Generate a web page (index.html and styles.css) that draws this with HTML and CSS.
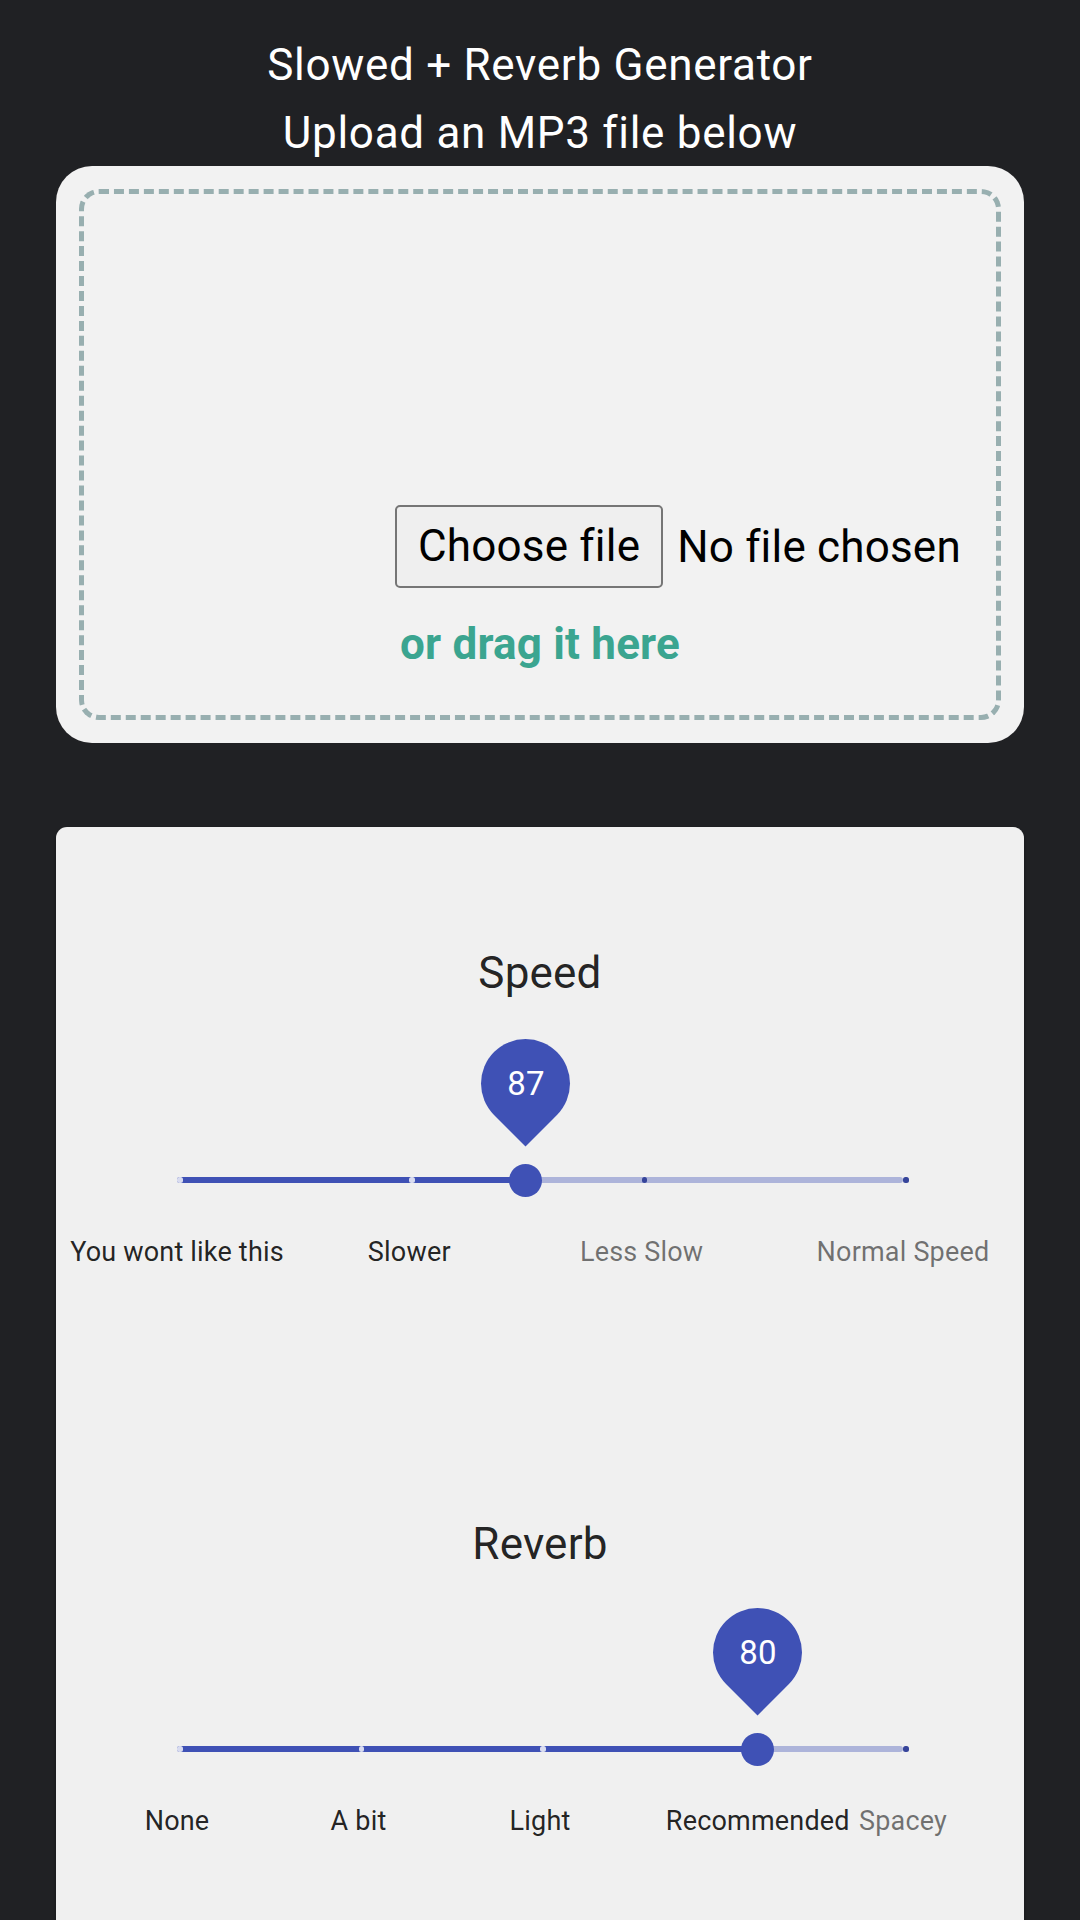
FILE: index.html
```html
<!DOCTYPE html>
<html lang="en">
<head>
<meta charset="utf-8">
<title>Slowed + Reverb Generator</title>
<link rel="stylesheet" href="styles.css">
</head>
<body>
<header class="intro">
  <div class="intro-line">Slowed + Reverb Generator</div>
  <div class="intro-line">Upload an MP3 file below</div>
</header>

<section class="upload">
  <div class="dropzone">
    <div class="file-row">
      <span class="file-button">Choose file</span>
      <span class="file-status">No file chosen</span>
    </div>
    <div class="drag-hint">or drag it here</div>
  </div>
</section>

<main class="controls">
  <div class="control">
    <div class="control-title">Speed</div>
    <div class="slider">
      <div class="rail"></div>
      <div class="track" style="width:48%"></div>
      <span class="mark mark-active" style="left:0%"></span>
      <span class="mark mark-active" style="left:32%"></span>
      <span class="mark" style="left:64%"></span>
      <span class="mark" style="left:100%"></span>
      <span class="thumb" style="left:48%"></span>
      <span class="pin" style="left:48%"><span class="pin-value">87</span></span>
      <span class="mark-label mark-label-active" style="left:0%">You wont like this</span>
      <span class="mark-label mark-label-active" style="left:32%">Slower</span>
      <span class="mark-label" style="left:64%">Less Slow</span>
      <span class="mark-label" style="left:100%">Normal Speed</span>
    </div>
  </div>

  <div class="control">
    <div class="control-title">Reverb</div>
    <div class="slider">
      <div class="rail"></div>
      <div class="track" style="width:80%"></div>
      <span class="mark mark-active" style="left:0%"></span>
      <span class="mark mark-active" style="left:25%"></span>
      <span class="mark mark-active" style="left:50%"></span>
      <span class="mark mark-active" style="left:80%"></span>
      <span class="mark" style="left:100%"></span>
      <span class="thumb" style="left:80%"></span>
      <span class="pin" style="left:80%"><span class="pin-value">80</span></span>
      <span class="mark-label mark-label-active" style="left:0%">None</span>
      <span class="mark-label mark-label-active" style="left:25%">A bit</span>
      <span class="mark-label mark-label-active" style="left:50%">Light</span>
      <span class="mark-label mark-label-active" style="left:80%">Recommended</span>
      <span class="mark-label" style="left:100%">Spacey</span>
    </div>
  </div>
</main>
</body>
</html>
```

FILE: styles.css
```css
* {
  box-sizing: border-box;
}

html,
body {
  margin: 0;
  padding: 0;
  background: #202124;
}

body {
  font-family: "Roboto", "Noto Sans", "Liberation Sans", sans-serif;
  letter-spacing: 0.012em;
  overflow: hidden;
}

.intro {
  padding-top: 31px;
  text-align: center;
  color: #ffffff;
  font-size: 44px;
  line-height: 68px;
  letter-spacing: 0.016em;
}

.upload {
  margin: -1px 56px 0;
  height: 577px;
  padding: 23px;
  background: #f2f2f2;
  border-radius: 36px;
}

.dropzone {
  height: 100%;
  border: 5px dashed #98afb0;
  border-radius: 20px;
  padding-top: 311px;
  display: flex;
  flex-direction: column;
  align-items: center;
}

.file-row {
  width: 290px;
  display: flex;
  align-items: center;
  gap: 14px;
}

.file-button {
  flex-shrink: 0;
  height: 83px;
  padding: 0 21px;
  border: 2px solid #767676;
  border-radius: 5px;
  background: #efefef;
  color: #000000;
  font-size: 44px;
  line-height: 79px;
  white-space: nowrap;
}

.file-status {
  flex-shrink: 0;
  color: #000000;
  font-size: 44px;
  white-space: nowrap;
}

.drag-hint {
  margin-top: 30px;
  color: #3ba590;
  font-size: 44px;
  font-weight: 700;
  line-height: 52px;
}

.controls {
  margin: 84px 56px 0;
  padding: 120px 0 240px;
  background: #f0f0f0;
  border-radius: 11px;
  box-shadow: 0 2px 3px rgba(0, 0, 0, 0.25), 0 1px 2px rgba(0, 0, 0, 0.2);
}

.control + .control {
  margin-top: 335px;
}

.control-title {
  text-align: center;
  color: rgba(0, 0, 0, 0.87);
  font-size: 44px;
  line-height: 52px;
}

.slider {
  position: relative;
  width: 75%;
  height: 6px;
  margin: 178px auto 0;
}

.control + .control .slider {
  margin-top: 176px;
}

.rail {
  position: absolute;
  top: 0;
  left: 0;
  width: 100%;
  height: 6px;
  border-radius: 3px;
  background: rgba(63, 81, 181, 0.38);
}

.track {
  position: absolute;
  top: 0;
  left: 0;
  height: 6px;
  border-radius: 3px;
  background: #3f51b5;
}

.mark {
  position: absolute;
  top: 0;
  width: 5.5px;
  height: 6px;
  border-radius: 2.5px;
  background: #36449a;
}

.mark-active {
  background: #d9dcf0;
}

.thumb {
  position: absolute;
  top: -13.5px;
  width: 33px;
  height: 33px;
  margin-left: -16.5px;
  border-radius: 50%;
  background: #3f51b5;
}

.pin {
  position: absolute;
  top: -138px;
  width: 89px;
  height: 89px;
  margin-left: -44.5px;
  border-radius: 50% 50% 50% 0;
  background: #3f51b5;
  transform: rotate(-45deg);
  display: flex;
  align-items: center;
  justify-content: center;
}

.pin-value {
  transform: rotate(45deg);
  color: #ffffff;
  font-size: 33px;
  line-height: 40px;
}

.mark-label {
  position: absolute;
  top: 59px;
  transform: translateX(-50%);
  color: rgba(0, 0, 0, 0.54);
  font-size: 27px;
  line-height: 32px;
  white-space: nowrap;
}

.mark-label-active {
  color: rgba(0, 0, 0, 0.87);
}
```
